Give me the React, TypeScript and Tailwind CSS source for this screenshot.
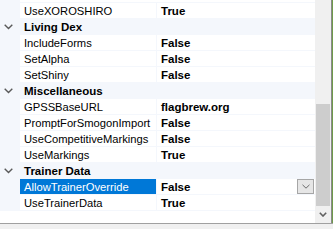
import React from "react";

const Chevron = () => (
  <svg width="9" height="6" viewBox="0 0 9 6" className="block">
    <path d="M0.7 0.8 L4.5 4.6 L8.3 0.8" fill="none" stroke="#595959" strokeWidth="1.4" />
  </svg>
);

function Category({ name }: { name: string }) {
  return (
    <div className="flex h-4 items-center bg-[#f4f7fc]">
      <div className="flex w-5 justify-center pr-[3px]">
        <Chevron />
      </div>
      <div className="pl-1 text-[11.5px] font-bold leading-[15px] text-black">{name}</div>
    </div>
  );
}

function Prop({
  name,
  value,
  selected,
  dropdown,
}: {
  name: string;
  value: string;
  selected?: boolean;
  dropdown?: boolean;
}) {
  return (
    <div className="flex h-4 border-b border-[#f4f7fc]">
      <div className="w-5 shrink-0 bg-[#f4f7fc]" />
      <div
        className={
          selected
            ? "w-[136px] shrink-0 bg-[#0078d7] pl-1 pt-px text-[11.2px] leading-[15px] text-white"
            : "w-[136px] shrink-0 bg-white pl-1 pt-px text-[11.2px] leading-[15px] text-black"
        }
      >
        {name}
      </div>
      <div className="w-px shrink-0 bg-[#f4f7fc]" />
      <div className="flex flex-1 items-stretch justify-between bg-white pl-1 pr-px">
        <span className="pt-px text-[11.5px] font-bold leading-[15px] text-black">{value}</span>
        {dropdown && (
          <div className="flex w-[17px] items-center justify-center border border-[#a6a6a6] bg-[#e6e6e6]">
            <svg width="8" height="5" viewBox="0 0 8 5" className="block">
              <path d="M0.5 0.8 L4 4.2 L7.5 0.8" fill="none" stroke="#6b6b6b" strokeWidth="1" />
            </svg>
          </div>
        )}
      </div>
    </div>
  );
}

export default function App() {
  return (
    <div className="flex h-[229px] w-[333px] flex-col overflow-hidden bg-[#f0f0f0] font-['Liberation_Sans',Arial,sans-serif]">
      <div className="flex h-[223px]">
        <div className="flex w-[315px] flex-col bg-white">
          <div className="flex h-[3px] border-b border-[#f4f7fc]">
            <div className="w-5 bg-[#f4f7fc]" />
          </div>
          <Prop name="UseXOROSHIRO" value="True" />
          <Category name="Living Dex" />
          <Prop name="IncludeForms" value="False" />
          <Prop name="SetAlpha" value="False" />
          <Prop name="SetShiny" value="False" />
          <Category name="Miscellaneous" />
          <Prop name="GPSSBaseURL" value="flagbrew.org" />
          <Prop name="PromptForSmogonImport" value="False" />
          <Prop name="UseCompetitiveMarkings" value="False" />
          <Prop name="UseMarkings" value="True" />
          <Category name="Trainer Data" />
          <Prop name="AllowTrainerOverride" value="False" selected dropdown />
          <Prop name="UseTrainerData" value="True" />
        </div>
        <div className="flex w-4 flex-col bg-[#f0f0f0]">
          <div className="h-[104px]" />
          <div className="mx-px h-[102px] bg-[#cdcdcd]" />
          <div className="flex flex-1 items-center justify-center">
            <svg width="8" height="5" viewBox="0 0 8 5" className="block">
              <path d="M0.8 0.8 L4 4 L7.2 0.8" fill="none" stroke="#606060" strokeWidth="1.6" />
            </svg>
          </div>
        </div>
        <div className="w-px bg-[#8a8a8a]" />
        <div className="w-px bg-[#6f9a4a]" />
      </div>
      <div className="h-px bg-[#a0a0a0]" />
      <div className="flex-1 bg-[#f0f0f0]" />
    </div>
  );
}
